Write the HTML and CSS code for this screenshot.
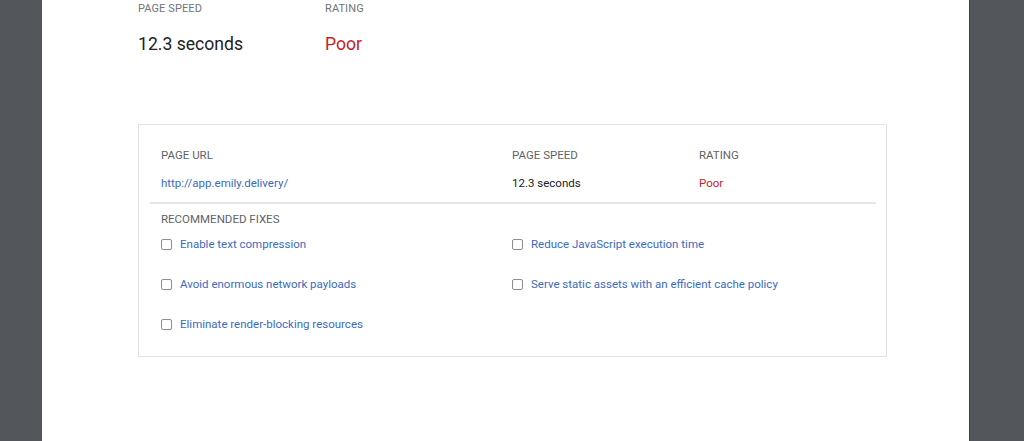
FILE: index.html
```html
<!DOCTYPE html>
<html>
<head>
<meta charset="utf-8">
<link rel="stylesheet" href="styles.css">
</head>
<body>
<div class="page">
  <div class="summary">
    <div class="sum-col sum-speed">
      <div class="sum-label">PAGE SPEED</div>
      <div class="sum-value">12.3 seconds</div>
    </div>
    <div class="sum-col">
      <div class="sum-label">RATING</div>
      <div class="sum-value poor">Poor</div>
    </div>
  </div>
  <div class="card">
    <div class="card-head">
      <div class="col col-url">
        <div class="label">PAGE URL</div>
        <div class="value link">http://app.emily.delivery/</div>
      </div>
      <div class="col col-speed">
        <div class="label">PAGE SPEED</div>
        <div class="value">12.3 seconds</div>
      </div>
      <div class="col">
        <div class="label">RATING</div>
        <div class="value poor">Poor</div>
      </div>
    </div>
    <div class="divider"></div>
    <div class="fixes">
      <div class="label">RECOMMENDED FIXES</div>
      <div class="fix-grid">
        <label class="fix"><span class="box"></span><span class="fix-text">Enable text compression</span></label>
        <label class="fix"><span class="box"></span><span class="fix-text">Reduce JavaScript execution time</span></label>
        <label class="fix"><span class="box"></span><span class="fix-text">Avoid enormous network payloads</span></label>
        <label class="fix"><span class="box"></span><span class="fix-text">Serve static assets with an efficient cache policy</span></label>
        <label class="fix"><span class="box"></span><span class="fix-text">Eliminate render-blocking resources</span></label>
      </div>
    </div>
  </div>
</div>
</body>
</html>
```
FILE: styles.css
```css
html, body {
  margin: 0;
  padding: 0;
  height: 100%;
}
body {
  background: #53565b;
  font-family: Roboto, "Liberation Sans", sans-serif;
  overflow: hidden;
}
.page {
  margin-left: 42px;
  width: 927px;
  height: 441px;
  background: #fff;
  box-shadow: 1px 0 0 #3e4045;
  padding: 0 0 0 96px;
  box-sizing: border-box;
}
.summary {
  display: flex;
  padding-top: 2px;
}
.sum-col { display: flex; flex-direction: column; }
.sum-speed { width: 187px; }
.sum-label {
  font-size: 11px;
  color: #70757a;
  line-height: 13px;
  letter-spacing: 0.1px;
}
.sum-value {
  font-size: 17.6px;
  line-height: 22px;
  color: #202124;
  margin-top: 18px;
}
.card {
  margin-top: 69px;
  width: 749px;
  height: 233px;
  box-sizing: border-box;
  border: 1px solid #e3e3e3;
  padding: 23px 10px 0 11px;
}
.card-head {
  display: flex;
  padding-left: 11px;
}
.col-url { width: 351px; }
.col-speed { width: 187px; }
.label {
  font-size: 11.5px;
  line-height: 14px;
  color: #5f6368;
}
.value {
  font-size: 11.5px;
  line-height: 14px;
  color: #202124;
  margin-top: 14px;
}
.link { color: #3b6bbf; }
.poor, .value.poor { color: #c5221f; }
.divider {
  height: 2px;
  background: #e6e6e6;
  margin-top: 12px;
}
.fixes {
  padding-left: 11px;
  padding-top: 8px;
}
.fix-grid {
  display: grid;
  grid-template-columns: 351px 1fr;
  row-gap: 26px;
  margin-top: 11px;
}
.fix {
  display: flex;
  align-items: center;
  height: 14px;
}
.box {
  width: 9px;
  height: 9px;
  border: 1px solid #8a8d91;
  border-radius: 2px;
  margin-right: 8px;
  flex: none;
}
.fix-text {
  font-size: 11.5px;
  line-height: 14px;
  color: #3b6bbf;
}
```
